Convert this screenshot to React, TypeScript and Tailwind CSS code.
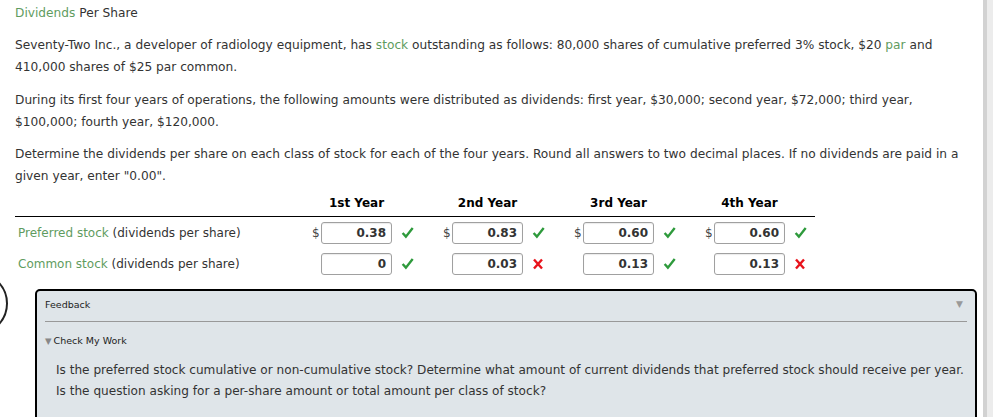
import React from 'react'

const font = { fontFamily: '"DejaVu Sans", Verdana, sans-serif' }

type Mark = 'ok' | 'bad'

interface Cell { value: string; mark: Mark }

const years = ['1st Year', '2nd Year', '3rd Year', '4th Year']

const rows: { label: string; dollar: boolean; cells: Cell[] }[] = [
  {
    label: 'Preferred stock',
    dollar: true,
    cells: [
      { value: '0.38', mark: 'ok' },
      { value: '0.83', mark: 'ok' },
      { value: '0.60', mark: 'ok' },
      { value: '0.60', mark: 'ok' },
    ],
  },
  {
    label: 'Common stock',
    dollar: false,
    cells: [
      { value: '0', mark: 'ok' },
      { value: '0.03', mark: 'bad' },
      { value: '0.13', mark: 'ok' },
      { value: '0.13', mark: 'bad' },
    ],
  },
]

function Check() {
  return (
    <svg width="13" height="13" viewBox="0 0 12 12" className="shrink-0">
      <path d="M1.5 6.5 L4.5 9.8 L10.8 1.8" fill="none" stroke="#2e9a3c" strokeWidth="2.2" />
    </svg>
  )
}

function Cross() {
  return (
    <svg width="12" height="12" viewBox="0 0 12 12" className="shrink-0">
      <path d="M2 1.5 L10 10.5 M10 1.5 L2 10.5" stroke="#e8121b" strokeWidth="2.4" />
    </svg>
  )
}

export default function App() {
  return (
    <div className="flex h-[417px] w-[993px] overflow-hidden bg-white text-[12.2px] text-[#333]" style={font}>
      <div className="relative w-[983px] px-[15px] pt-[4px]">
        <p className="leading-[18px]">
          <span className="text-[#5f9c5f]">Dividends</span> Per Share
        </p>

        <p className="mt-[12px] leading-[22px]">
          Seventy-Two Inc., a developer of radiology equipment, has <span className="text-[#5f9c5f]">stock</span> outstanding as follows: 80,000 shares of cumulative preferred 3% stock, $20 <span className="text-[#5f9c5f]">par</span> and 410,000 shares of $25 par common.
        </p>

        <p className="mt-[11px] leading-[22px]">
          During its first four years of operations, the following amounts were distributed as dividends: first year, $30,000; second year, $72,000; third year, $100,000; fourth year, $120,000.
        </p>

        <p className="mt-[10px] leading-[22px]">
          Determine the dividends per share on each class of stock for each of the four years. Round all answers to two decimal places. If no dividends are paid in a given year, enter "0.00".
        </p>

        {/* table */}
        <div className="mt-[7px] w-[800px] text-[12px]">
          <div className="grid grid-cols-[276px_repeat(4,131px)] border-b border-black pb-[4px]">
            <div />
            {years.map(y => (
              <div key={y} className="pl-[30px]">
                <div className="w-[71px] whitespace-nowrap text-center font-bold text-black">{y}</div>
              </div>
            ))}
          </div>
          {rows.map(r => (
            <div key={r.label} className="grid h-[31px] grid-cols-[276px_repeat(4,131px)] items-center">
              <div className="pl-[3px]">
                <span className="text-[#5f9c5f]">{r.label}</span> (dividends per share)
              </div>
              {r.cells.map((c, j) => (
                <div key={j} className="flex items-center pl-[21px]">
                  <span className="w-[9px] text-[#444]">{r.dollar ? '$' : ''}</span>
                  <div className="flex h-[22px] w-[71px] items-center justify-end rounded-[3px] border border-[#a0a0a0] bg-white pr-[5px] font-bold text-[#333] shadow-[inset_0_1px_1px_rgba(0,0,0,0.08)]">
                    {c.value}
                  </div>
                  <span className="ml-[9px]">{c.mark === 'ok' ? <Check /> : <Cross />}</span>
                </div>
              ))}
            </div>
          ))}
        </div>

        {/* partial circle at the left edge */}
        <div className="absolute left-[-55px] top-[272px] h-[63px] w-[63px] rounded-full border-[2.5px] border-[#222]" />

        {/* feedback */}
        <div className="ml-[20px] mt-[10px] h-[140px] w-[942px] rounded-[5px] border-2 border-black bg-[#dfe5e9] px-[8px]">
          <div className="flex items-center justify-between pt-[7px] text-[9.5px] text-[#222]">
            <span>Feedback</span>
            <span className="mr-[4px] text-[9px] text-[#999]">▼</span>
          </div>
          <div className="mt-[9px] border-t border-[#999]" />
          <div className="mt-[12px] flex items-center text-[9.5px] text-[#222]">
            <span className="mr-[2px] text-[8.5px] text-[#888]">▼</span>Check My Work
          </div>
          <div className="mt-[11px] pl-[11px] text-[12.1px] leading-[21px] text-[#333]">
            <p>Is the preferred stock cumulative or non-cumulative stock? Determine what amount of current dividends that preferred stock should receive per year.</p>
            <p>Is the question asking for a per-share amount or total amount per class of stock?</p>
          </div>
        </div>
      </div>
      <div className="flex w-[10px]">
        <div className="w-[4px] bg-[#d2d2d2]" />
        <div className="flex-1 bg-[#ececec]" />
      </div>
    </div>
  )
}
